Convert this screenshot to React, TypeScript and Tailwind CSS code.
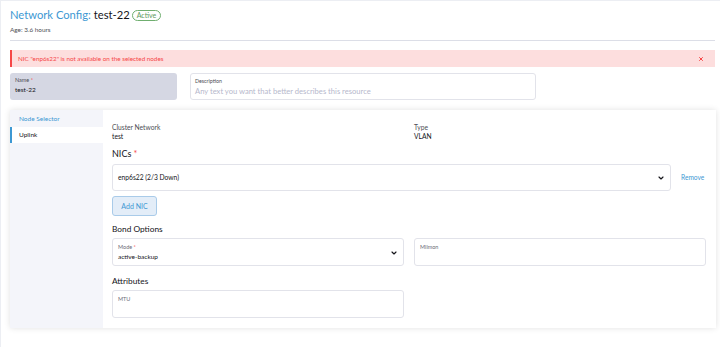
import { ChevronDown, X } from "lucide-react";

function Field({ label, value, required, select, className = "" }: { label: string; value?: string; required?: boolean; select?: boolean; className?: string }) {
  return (
    <div className={`relative h-[28px] rounded-[3px] border border-[#e2e3ea] bg-white px-[5px] pt-[5px] ${className}`}>
      <div className="text-[5.5px] leading-[7px] text-[#6b6c76]">
        {label}
        {required && <span className="text-[#f64747]"> *</span>}
      </div>
      {value && <div className="mt-[1px] text-[6.5px] leading-[10px] text-[#141419]">{value}</div>}
      {select && <ChevronDown className="absolute right-[5px] top-[10px] h-[8px] w-[8px] text-[#141419]" strokeWidth={3.5} />}
    </div>
  );
}

export default function App() {
  return (
    <div className="h-[347px] w-[720px] overflow-hidden bg-white font-['Lato','Noto_Sans',sans-serif] text-[#141419]">
      <div className="h-[347px] border-l border-t border-[#eceef3] bg-white">
        {/* Header */}
        <div className="pl-[9px] pt-[6px]">
          <div className="flex items-center text-[11.2px] leading-[16px]">
            <span className="text-[#3d98d3]">Network Config:</span>
            <span className="ml-[3px]">test-22</span>
            <span className="ml-[2px] flex h-[11px] items-center rounded-full border border-[#6fae6f] px-[4px] text-[7px] text-[#5d995d]">Active</span>
          </div>
          <div className="mt-[2px] text-[6.4px] leading-[9px] text-[#4d4e55]">Age: 3.6 hours</div>
        </div>
        <div className="ml-[9px] mt-[6px] w-[705px] border-t border-[#dcdee7]" />

        {/* Error banner */}
        <div className="ml-[9px] mt-[9px] flex h-[17px] w-[705px] items-center justify-between border-l-2 border-[#f64747] bg-[#fddede] pl-[6px] pr-[11px]">
          <span className="text-[6.3px] text-[#f64747]">NIC "enp6s22" is not available on the selected nodes</span>
          <X className="h-[6px] w-[6px] text-[#f64747]" strokeWidth={4} />
        </div>

        {/* Name / description */}
        <div className="ml-[9px] mt-[6px] flex gap-[13px]">
          <div className="h-[27px] w-[167px] rounded-[3px] bg-[#d5d7e3] px-[5px] pt-[4px]">
            <div className="text-[5.5px] leading-[7px] text-[#4d4e55]">
              Name<span className="text-[#f64747]"> *</span>
            </div>
            <div className="mt-[1px] text-[6.5px] leading-[10px]">test-22</div>
          </div>
          <div className="h-[27px] w-[346px] rounded-[3px] border border-[#e2e3ea] px-[4px] pt-[4px]">
            <div className="text-[5.3px] leading-[7px] text-[#4d4e55]">Description</div>
            <div className="mt-[1px] text-[7.6px] leading-[10px] text-[#b6b8cc]">Any text you want that better describes this resource</div>
          </div>
        </div>

        {/* Tabbed card */}
        <div className="ml-[9px] mt-[10px] flex h-[218px] w-[706px] shadow-[0_0_6px_rgba(0,0,0,0.12)]">
          <div className="w-[93px] bg-[#f4f5fa]">
            <div className="flex h-[17px] items-center px-[9px] text-[6.5px] text-[#3d98d3]">Node Selector</div>
            <div className="flex h-[16px] items-center border-l-2 border-[#3d98d3] bg-white px-[7px] text-[6.5px]">Uplink</div>
          </div>
          <div className="flex-1 bg-white px-[9px] pt-[13px]">
            <div className="flex">
              <div className="w-[302px]">
                <div className="text-[6.7px] leading-[9px] text-[#4d4e55]">Cluster Network</div>
                <div className="text-[6.7px] leading-[9px]">test</div>
              </div>
              <div>
                <div className="text-[6.7px] leading-[9px] text-[#4d4e55]">Type</div>
                <div className="text-[6.7px] leading-[9px]">VLAN</div>
              </div>
            </div>

            <div className="mt-[6px] text-[9px] leading-[14px]">
              NICs<span className="text-[#f64747]"> *</span>
            </div>
            <div className="mt-[3px] flex items-center">
              <div className="relative flex h-[27px] w-[559px] items-center rounded-[3px] border border-[#e2e3ea] px-[5px]">
                <span className="text-[6.7px]">enp6s22 (2/3 Down)</span>
                <ChevronDown className="absolute right-[5px] top-[9px] h-[8px] w-[8px]" strokeWidth={3.5} />
              </div>
              <span className="ml-[10px] text-[6.6px] text-[#3d98d3]">Remove</span>
            </div>
            <button className="mt-[5px] h-[20px] w-[45px] rounded-[3px] border border-[#a9cbe9] bg-[#e3edf8] text-[7px] text-[#3d98d3]">Add NIC</button>

            <div className="mt-[7px] text-[8.3px] leading-[13px]">Bond Options</div>
            <div className="mt-[2px] flex gap-[10px]">
              <Field label="Mode" value="active-backup" required select className="w-[292px]" />
              <Field label="Miimon" className="w-[292px]" />
            </div>

            <div className="mt-[8px] text-[8.3px] leading-[14px]">Attributes</div>
            <div className="mt-[2px] flex">
              <Field label="MTU" className="w-[292px]" />
            </div>
          </div>
        </div>
      </div>
    </div>
  );
}
